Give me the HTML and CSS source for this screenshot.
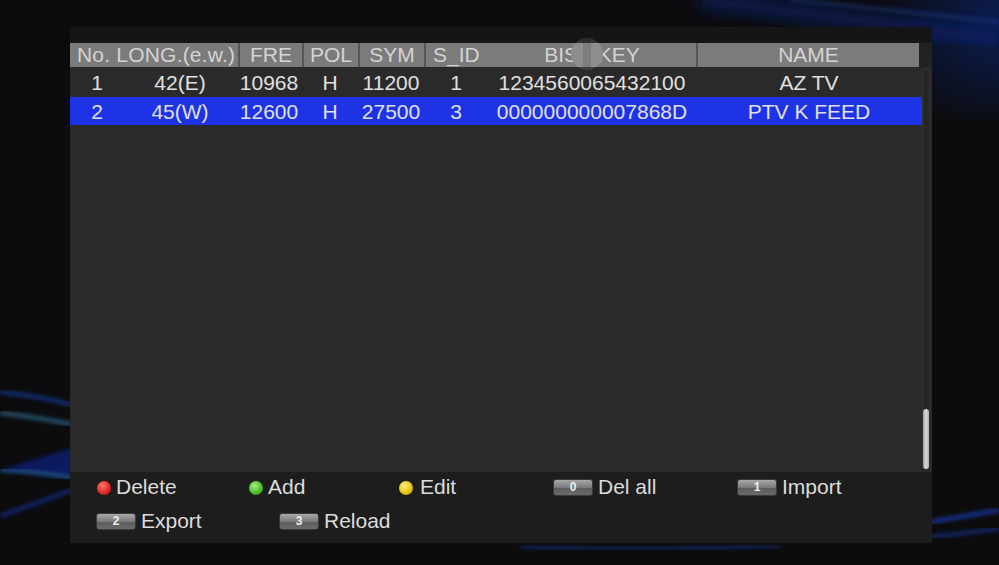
FILE: index.html
```html
<!DOCTYPE html>
<html lang="en">
<head>
  <meta charset="UTF-8" />
  <title>BISS Key List</title>
  <link rel="stylesheet" href="styles.css">
</head>
<body>
  <!-- background streaks -->
  <svg class="backdrop" width="999" height="565" viewBox="0 0 999 565">
    <defs>
      <filter id="soft"><feGaussianBlur stdDeviation="2" /></filter>
      <filter id="wide"><feGaussianBlur stdDeviation="8" /></filter>
      <radialGradient id="glow" cx="1" cy="0.2" r="0.9">
        <stop offset="0" stop-color="#0b2470" stop-opacity="0.7" />
        <stop offset="1" stop-color="#0b2470" stop-opacity="0" />
      </radialGradient>
    </defs>
    <rect x="860" y="0" width="139" height="120" fill="url(#glow)" />
    <path d="M700 0 Q850 18 999 40" stroke="#0a2270" stroke-width="14" fill="none" filter="url(#wide)" opacity="0.8" />
    <path d="M790 0 Q900 10 999 22" stroke="#2f56b8" stroke-width="2" fill="none" filter="url(#soft)" opacity="0.6" />
    <path d="M0 392 Q40 396 72 405" stroke="#1a46c8" stroke-width="3" fill="none" filter="url(#soft)" opacity="0.8" />
    <path d="M0 413 Q36 417 72 424" stroke="#3a86b8" stroke-width="3" fill="none" filter="url(#soft)" opacity="0.8" />
    <path d="M0 470 L72 448 L72 478 Z" fill="#0b2484" filter="url(#soft)" opacity="0.7" />
    <path d="M0 470 Q40 472 72 478" stroke="#2c74a8" stroke-width="3" fill="none" filter="url(#soft)" opacity="0.8" />
    <path d="M0 516 Q40 502 72 490" stroke="#1436b0" stroke-width="3" fill="none" filter="url(#soft)" opacity="0.8" />
    <path d="M520 547 Q650 551 780 546" stroke="#1a3ab8" stroke-width="2" fill="none" filter="url(#soft)" opacity="0.8" />
    <path d="M930 522 Q960 517 999 510" stroke="#1a40c4" stroke-width="3" fill="none" filter="url(#soft)" />
    <path d="M930 537 Q965 533 999 529" stroke="#1840c0" stroke-width="2" fill="none" filter="url(#soft)" />
  </svg>

  <div class="panel">
    <div class="list-head">
      <div class="head">
        <div class="hcell first">No. LONG.(e.w.)</div>
        <div class="hcell sep">FRE</div>
        <div class="hcell sep">POL</div>
        <div class="hcell sep">SYM</div>
        <div class="hcell sep left">S_ID</div>
        <div class="hcell">BISS KEY</div>
        <div class="hcell sep">NAME</div>
        <span class="cursor"></span>
      </div>
      <div class="head-end"></div>
    </div>

    <div class="list">
      <div class="rows">
        <div class="row">
          <span>1</span><span>42(E)</span><span>10968</span><span>H</span><span>11200</span><span>1</span><span>1234560065432100</span><span>AZ TV</span>
        </div>
        <div class="row selected">
          <span>2</span><span>45(W)</span><span>12600</span><span>H</span><span>27500</span><span>3</span><span>000000000007868D</span><span>PTV K FEED</span>
        </div>
      </div>
      <div class="scroll"><div class="thumb"></div></div>
    </div>

    <div class="foot">
      <div class="keys">
        <div class="key w152"><i class="dot red"></i>Delete</div>
        <div class="key w150"><i class="dot green"></i>Add</div>
        <div class="key w155"><i class="dot yellow"></i>Edit</div>
        <div class="key w184"><b class="btn">0</b>Del all</div>
        <div class="key"><b class="btn">1</b>Import</div>
      </div>
      <div class="keys">
        <div class="key w183"><b class="btn">2</b>Export</div>
        <div class="key"><b class="btn">3</b>Reload</div>
      </div>
    </div>
  </div>
</body>
</html>
```

FILE: styles.css
```css
body { margin: 0; width: 999px; height: 565px; overflow: hidden; background: #0c0c0e; font-family: "Liberation Sans", Arial, sans-serif; color: #e2e2e2; position: relative; }
.backdrop { position: absolute; left: 0; top: 0; z-index: 0; }

.panel { position: relative; z-index: 1; margin: 27px 0 0 70px; width: 862px; padding-top: 16px; background: #151515; }

.list-head { display: flex; height: 24px; }
.head {
  position: relative;
  width: 849px;
  display: grid;
  grid-template-columns: 168px 64px 56px 66px 64px 208px 223px;
  background: #7b7b7b;
  color: #d4d4d4;
  font-size: 21px;
  line-height: 24px;
}
.head-end { flex: 1; background: #222; }
.hcell { text-align: center; white-space: nowrap; }
.hcell.first { text-align: left; padding-left: 7px; letter-spacing: 0.2px; }
.hcell.left { text-align: left; padding-left: 7px; }
.hcell.sep { border-left: 2px solid #555; }
.cursor {
  position: absolute;
  left: 501px;
  top: -5px;
  width: 32px;
  height: 32px;
  border-radius: 50%;
  background:
    linear-gradient(to right, transparent 0 12px, rgba(0, 0, 0, 0.12) 12px 20px, transparent 20px),
    linear-gradient(to bottom, #333 0 5px, #8e8e8e 5px 29px, #444 29px);
}

.list { display: flex; height: 405px; background: #2a2a2a; }
.rows { width: 852px; padding-top: 1px; display: flex; flex-direction: column; gap: 1px; }
.row {
  display: grid;
  grid-template-columns: 54px 112px 66px 56px 66px 64px 208px 226px;
  height: 28px;
  line-height: 29px;
  font-size: 21px;
  text-align: center;
  color: #e0e0e0;
}
.row.selected { background: #1e33e6; }
.scroll { width: 8px; margin: 1px 0 2px; background: #262626; border: 1px solid #333; border-radius: 4px; display: flex; flex-direction: column; justify-content: flex-end; box-sizing: border-box; }
.thumb { height: 60px; border-radius: 4px; background: linear-gradient(to right, #9a9a9a, #dcdcdc 50%, #a8a8a8); }

.foot { height: 71px; box-sizing: border-box; padding: 4px 0 0 26px; background: #1d1d1d; display: flex; flex-direction: column; gap: 12px; }
.keys { display: flex; height: 22px; }
.key { display: flex; align-items: center; font-size: 21px; color: #dcdcdc; white-space: nowrap; }
.w150 { width: 150px; }
.w152 { width: 152px; }
.w155 { width: 155px; }
.w183 { width: 183px; }
.w184 { width: 184px; }
.dot { width: 14px; height: 14px; border-radius: 50%; margin: 1px 5px 0 1px; }
.dot.red { background: radial-gradient(circle at 40% 35%, #ff7a70, #e02a24 55%, #a8120e); }
.dot.green { background: radial-gradient(circle at 40% 35%, #a8f080, #4cbc2a 55%, #2a8a14); }
.dot.yellow { background: radial-gradient(circle at 40% 35%, #fff080, #e8c414 55%, #b08a08); margin-right: 7px; }
.btn {
  width: 40px;
  height: 17px;
  margin: 1px 5px 0 0;
  box-sizing: border-box;
  border: 1px solid #3a3a3a;
  border-radius: 3px;
  background: linear-gradient(to bottom, #a8a8a8, #7a7a7a 50%, #5c5c5c 51%, #6a6a6a);
  color: #eeeeee;
  font-size: 12px;
  line-height: 15px;
  text-align: center;
}
```
